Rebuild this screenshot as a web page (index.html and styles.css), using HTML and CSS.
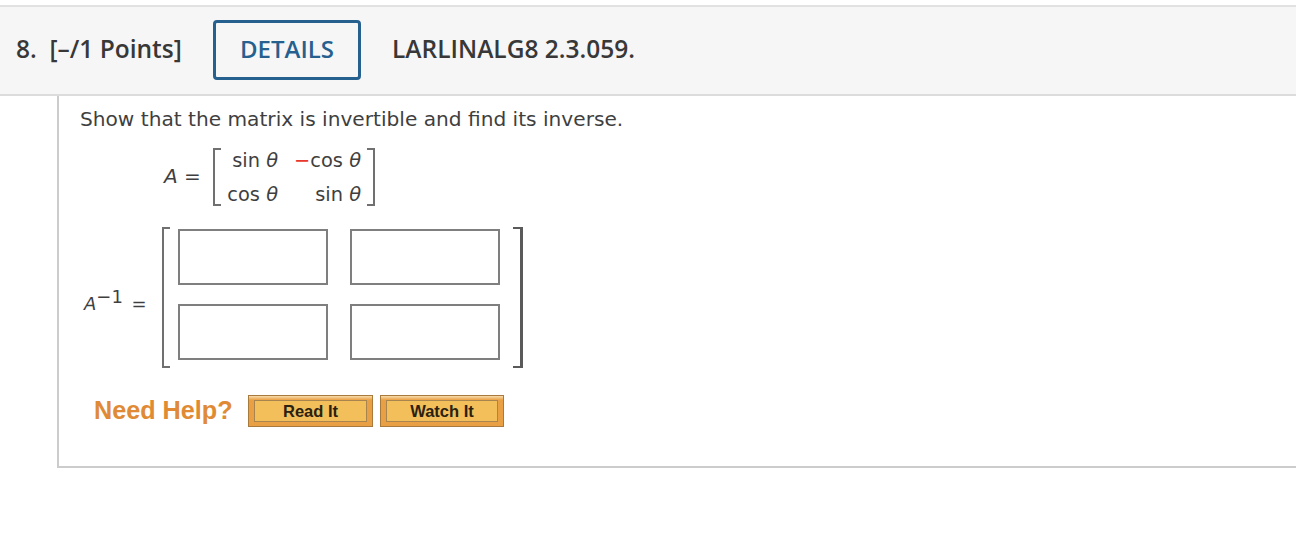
FILE: index.html
```html
<!DOCTYPE html>
<html lang="en">
<head>
<meta charset="utf-8">
<title>Question 8</title>
<link rel="stylesheet" href="styles.css">
</head>
<body>
<section class="question">
  <header class="head">
    <span class="points">8.&nbsp; [–/1 Points]</span>
    <a class="details">DETAILS</a>
    <span class="code">LARLINALG8 2.3.059.</span>
  </header>
  <div class="content">
    <p class="prompt">Show that the matrix is invertible and find its inverse.</p>
    <div class="eq eq-a">
      <span class="label"><i>A</i> =</span>
      <div class="matrix">
        <div class="cell">sin <i>θ</i></div>
        <div class="cell"><span class="minus">−</span>cos <i>θ</i></div>
        <div class="cell">cos <i>θ</i></div>
        <div class="cell">sin <i>θ</i></div>
      </div>
    </div>
    <div class="eq eq-inv">
      <span class="label"><i>A</i><sup>−1</sup> <span class="eqs">=</span></span>
      <div class="matrix boxes">
        <input class="box" type="text" aria-label="row 1 column 1">
        <input class="box" type="text" aria-label="row 1 column 2">
        <input class="box" type="text" aria-label="row 2 column 1">
        <input class="box" type="text" aria-label="row 2 column 2">
      </div>
    </div>
    <div class="help">
      <span class="need">Need Help?</span>
      <a class="btn"><span class="btn-face">Read It</span></a>
      <a class="btn"><span class="btn-face">Watch It</span></a>
    </div>
  </div>
</section>
</body>
</html>
```
FILE: styles.css
```css
html, body { margin: 0; padding: 0; background: #fff; }
body { padding-top: 5px; height: 546px; overflow: hidden; color: #3f3f3f; }

.head {
  display: flex;
  align-items: center;
  height: 87px;
  padding-left: 16px;
  background: #f6f6f6;
  border-top: 2px solid #e1e1e1;
  border-bottom: 2px solid #dcdcdc;
  font-family: "Open Sans", sans-serif;
  font-weight: 600;
  font-size: 24.5px;
  color: #383838;
}
.points { width: 197px; padding-bottom: 5px; }
.details {
  box-sizing: border-box;
  width: 148px;
  height: 60px;
  margin-bottom: 2px;
  padding-bottom: 3px;
  display: flex;
  align-items: center;
  justify-content: center;
  border: 3px solid #26608f;
  border-radius: 4px;
  color: #26608f;
  font-size: 24px;
}
.code { margin-left: 31px; padding-bottom: 5px; }

.content {
  box-sizing: border-box;
  height: 372px;
  margin-left: 57px;
  padding: 0 0 0 21px;
  border-left: 2px solid #cccccc;
  border-bottom: 2px solid #cccccc;
  font-family: "DejaVu Sans", sans-serif;
}
.prompt {
  margin: 0;
  padding-top: 10px;
  height: 42px;
  box-sizing: border-box;
  font-size: 20.15px;
  line-height: 26px;
}

.eq { display: flex; align-items: center; }
.label { font-size: 20px; white-space: nowrap; }
.eq-a { margin-left: 84px; margin-top: 10px; }
.eq-a .label { width: 49px; padding-bottom: 2px; }

.matrix {
  position: relative;
  display: grid;
}
.matrix::before, .matrix::after {
  content: "";
  position: absolute;
  top: 0;
  bottom: 0;
  width: 6px;
  border: 2px solid #707070;
}
.matrix::before { left: 0; border-right: 0; }
.matrix::after { right: 0; border-left: 0; }

.eq-a .matrix {
  grid-template-columns: 65px 83px;
  grid-auto-rows: 34px;
  width: 162px;
  height: 58px;
  align-content: center;
  font-size: 19.4px;
}
.cell { text-align: right; line-height: 34px; white-space: nowrap; padding-top: 1px; }
.minus { color: #e8372c; }

.eq-inv { margin-top: 21px; margin-left: 4px; }
.eq-inv .label { width: 78px; font-size: 18px; padding-top: 11px; }
.eq-inv sup { font-size: 18px; line-height: 0; vertical-align: 7px; }
.eqs { margin-left: 3px; }
.boxes {
  box-sizing: border-box;
  grid-template-columns: 150px 150px;
  grid-auto-rows: 56px;
  gap: 19px 22px;
  width: 361px;
  height: 141px;
  padding: 2px 0 0 16px;
}
.boxes::after { width: 7px; border-color: #5a5a5a; border-right-width: 3px; }
.box {
  box-sizing: border-box;
  width: 150px;
  height: 56px;
  margin: 0;
  padding: 0;
  border: 2px solid #7f7f7f;
  background: #fff;
}

.help {
  display: flex;
  align-items: center;
  margin-top: 27px;
  margin-left: 14px;
}
.need {
  width: 154px;
  padding-bottom: 2px;
  font-family: "Liberation Sans", sans-serif;
  font-weight: 700;
  font-size: 25.2px;
  color: #e08a35;
}
.btn {
  box-sizing: border-box;
  width: 125px;
  height: 32px;
  margin-right: 7px;
  padding: 4px 5px;
  display: flex;
  background: linear-gradient(#f8dcae 0, #e9a044 4px, #e9a044 100%);
  border: 1px solid #a87a3b;
}
.btn + .btn { width: 124px; }
.btn-face {
  flex: 1;
  display: flex;
  align-items: center;
  justify-content: center;
  background: #f3bf5b;
  border: 1px solid #a8854f;
  font-family: "Liberation Sans", sans-serif;
  font-weight: 700;
  font-size: 16.5px;
  color: #2a2212;
}
```
